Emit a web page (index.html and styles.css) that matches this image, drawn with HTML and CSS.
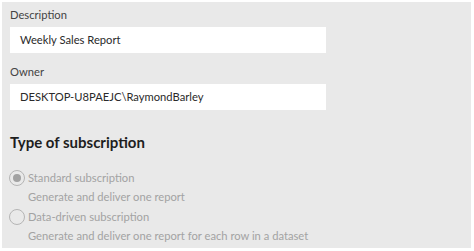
FILE: index.html
```html
<!DOCTYPE html>
<html lang="en">
<head>
    <meta charset="UTF-8">
    <title>Subscription</title>
    <link rel="stylesheet" href="styles.css">
</head>
<body>
    <div class="panel">
        <label class="field-label">Description</label>
        <div class="text-box">Weekly Sales Report</div>
        <label class="field-label">Owner</label>
        <div class="text-box">DESKTOP-U8PAEJC\RaymondBarley</div>

        <h2 class="section-title">Type of subscription</h2>
        <div class="option">
            <span class="radio checked"></span>
            <span class="option-name">Standard subscription</span>
        </div>
        <div class="option-desc">Generate and deliver one report</div>
        <div class="option">
            <span class="radio"></span>
            <span class="option-name">Data-driven subscription</span>
        </div>
        <div class="option-desc">Generate and deliver one report for each row in a dataset</div>
    </div>
</body>
</html>
```

FILE: styles.css
```css
body {
    margin: 0;
    background: #ffffff;
    font-family: "Lato", "Open Sans", sans-serif;
    font-size: 11.2px;
    color: #333333;
}
.panel {
    margin: 2px 3px 0 2px;
    height: 246px;
    background: #e9e9e9;
    padding: 6px 8px 0 8px;
    box-sizing: border-box;
    overflow: hidden;
}
.field-label {
    display: block;
    height: 19px;
    line-height: 14px;
    color: #444444;
}
.text-box {
    width: 316px;
    height: 26px;
    line-height: 26px;
    padding-left: 10px;
    box-sizing: border-box;
    background: #ffffff;
    color: #2a2a2a;
    margin-bottom: 12px;
}
.section-title {
    margin: 23px 0 17px 0;
    font-size: 15px;
    font-weight: bold;
    color: #1e1e1e;
    line-height: 18px;
}
.option {
    display: flex;
    align-items: center;
    height: 20px;
    line-height: 18px;
    color: #a3a3a3;
}
.radio {
    width: 14px;
    height: 14px;
    border: 1px solid #b5b5b5;
    border-radius: 50%;
    margin: 0 3px 0 -1px;
    position: relative;
    flex-shrink: 0;
}
.radio.checked::after {
    content: "";
    position: absolute;
    left: 3px;
    top: 3px;
    width: 8px;
    height: 8px;
    border-radius: 50%;
    background: #a2a2a2;
}
.option-desc {
    padding-left: 18px;
    color: #a3a3a3;
    height: 19px;
    line-height: 18px;
}
```
